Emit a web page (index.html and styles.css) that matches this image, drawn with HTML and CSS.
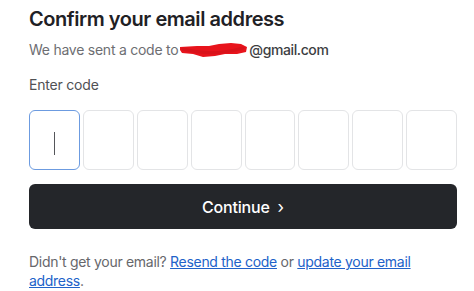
FILE: index.html
```html
<!DOCTYPE html>
<html>
    <head>
        <title>Confirm your email address</title>
        <link rel="stylesheet" href="styles.css">
    </head>
    <body>
        <div class="container">
            <h1 class="title">Confirm your email address</h1>
            <p class="sent">We have sent a code to<span class="redacted"><svg width="70" height="16" viewBox="0 0 70 16"><path d="M1 5 L18 4 L30 4 L40 2 L52 1 L62 2 L68 5 L67 10 L58 12 L46 12 L36 14 L24 15 L14 12 L3 11 L1 8 Z" fill="#e8141c"/><path d="M4 7 Q34 15 64 6" stroke="#d9121a" stroke-width="3" fill="none" stroke-linecap="round"/></svg></span><span class="email">@gmail.com</span></p>

            <div class="label">Enter code</div>
            <div class="code-boxes">
                <div class="box active"><div class="cursor"></div></div>
                <div class="box"></div>
                <div class="box"></div>
                <div class="box"></div>
                <div class="box"></div>
                <div class="box"></div>
                <div class="box"></div>
                <div class="box"></div>
            </div>

            <button class="continue">Continue <span class="chev">&#x203A;</span></button>

            <p class="footer">Didn't get your email? <a href="#">Resend the code</a> or <a href="#">update your email address</a>.</p>
        </div>
    </body>
</html>
```

FILE: styles.css
```css
body {
    margin: 0;
    background: white;
    font-family: Inter, "Liberation Sans", sans-serif;
    color: #1f2125;
}
.container {
    padding: 7px 17px 0 29px;
}
.title {
    font-size: 20px;
    font-weight: 600;
    line-height: 24px;
    margin: 0;
    letter-spacing: -0.45px;
}
.sent {
    margin: 9px 0 0;
    font-size: 14px;
    line-height: 20px;
    color: #6d6e72;
    display: flex;
    align-items: center;
    letter-spacing: -0.25px;
}
.redacted {
    display: inline-flex;
    margin-left: 1px;
}
.email {
    color: #3d3e42;
    font-weight: 500;
    letter-spacing: -0.4px;
}
.label {
    margin-top: 15px;
    font-size: 14px;
    line-height: 20px;
    color: #505155;
    letter-spacing: -0.2px;
}
.code-boxes {
    display: flex;
    gap: 3px;
    margin-top: 15px;
}
.box {
    flex: 1;
    height: 60px;
    box-sizing: border-box;
    border: 1px solid #e3e4e6;
    border-radius: 6px;
    display: flex;
    align-items: center;
    justify-content: center;
}
.box.active {
    border-color: #6c9be0;
}
.cursor {
    width: 1px;
    height: 23px;
    margin-top: 7px;
    background: #55565a;
}
.continue {
    display: flex;
    align-items: center;
    justify-content: center;
    width: 100%;
    height: 45px;
    margin-top: 14px;
    border: none;
    border-radius: 6px;
    background: #24262a;
    color: white;
    font-family: inherit;
    font-size: 16px;
    font-weight: 500;
    letter-spacing: -0.2px;
}
.chev {
    margin-left: 8px;
    font-size: 17px;
    font-weight: 400;
}
.footer {
    margin: 23px 0 0;
    font-size: 14px;
    line-height: 19px;
    color: #66676b;
    padding-right: 40px;
    letter-spacing: -0.3px;
}
.footer a {
    color: #2162c9;
}
```
